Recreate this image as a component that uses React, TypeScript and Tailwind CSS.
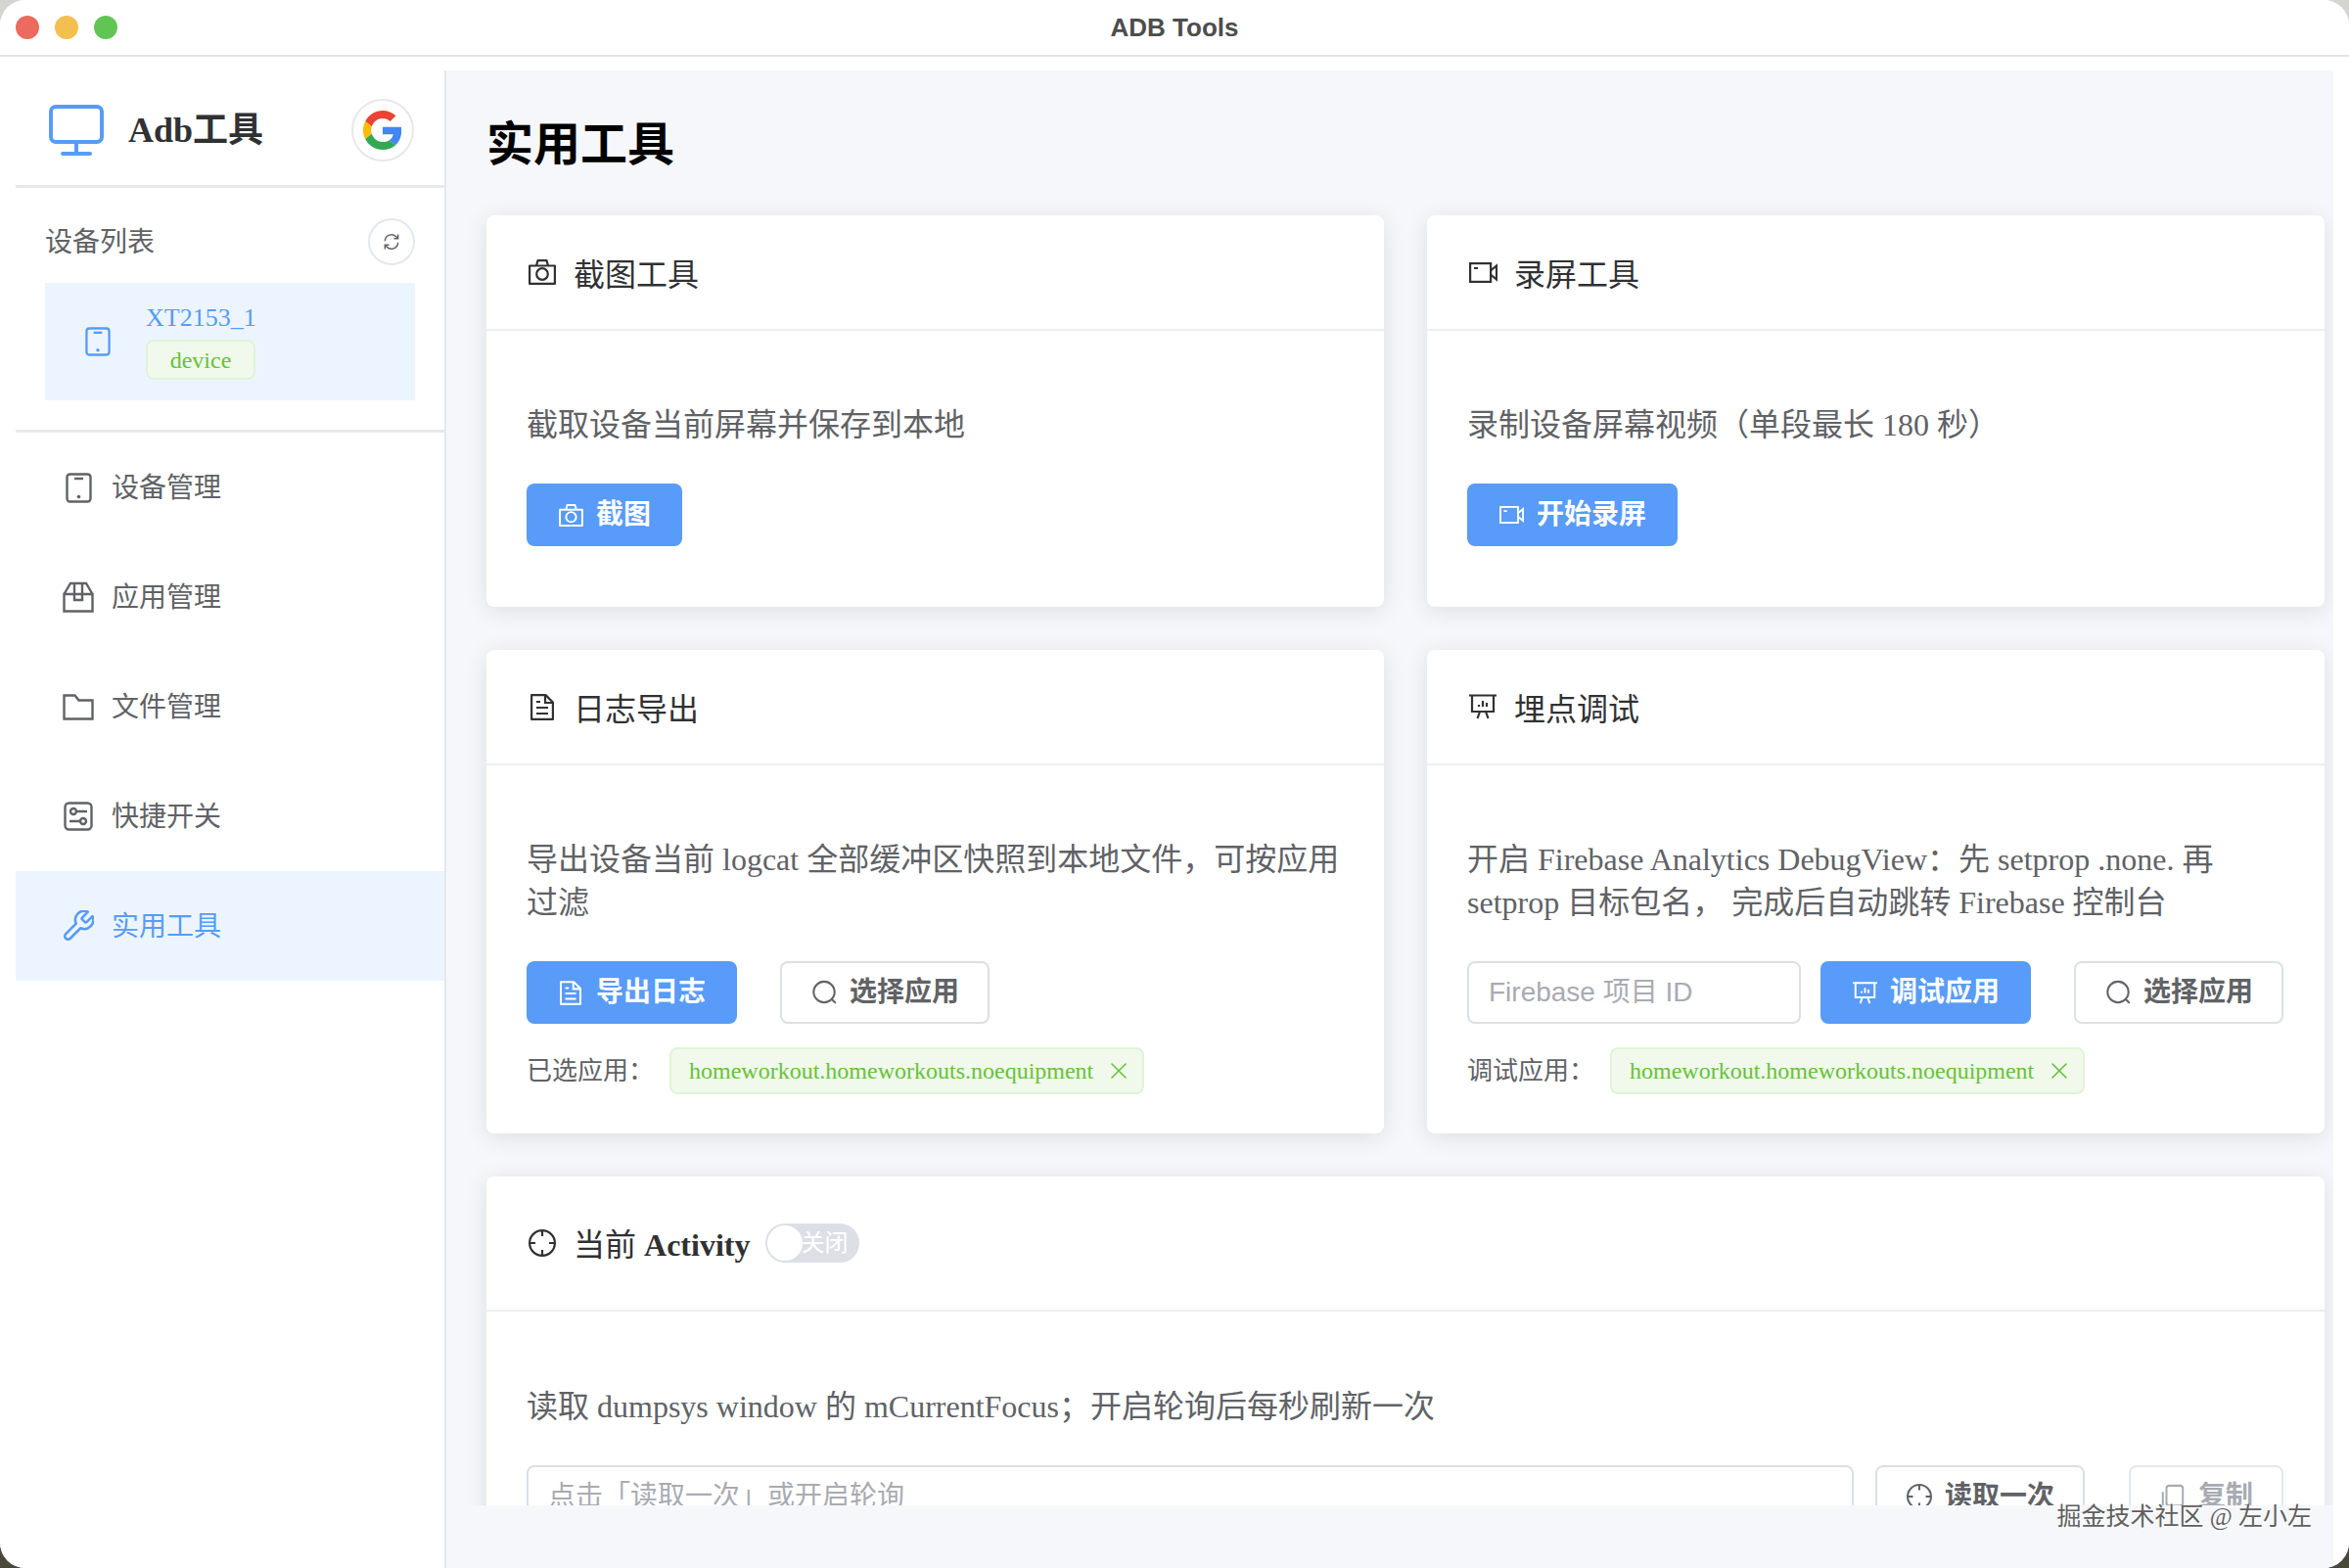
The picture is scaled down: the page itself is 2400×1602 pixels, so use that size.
import React from 'react';
import { X } from 'lucide-react';

type IconProps = { className?: string };

const line = {
  fill: 'none',
  stroke: 'currentColor',
  strokeWidth: 2.2,
};

const Monitor = ({ className }: IconProps) => (
  <svg {...line} viewBox="0 0 56 52" strokeWidth={4} className={className}>
    <rect x="2" y="2" width="52" height="36" rx="5" />
    <path d="M28 38v10M14 50h28" strokeLinecap="round" />
  </svg>
);

const Phone = ({ className }: IconProps) => (
  <svg {...line} viewBox="0 0 27 31" strokeWidth={2.4} className={className}>
    <rect x="1.5" y="1.500" width="24" height="28" rx="3" />
    <path d="M9 6h9" />
    <circle cx="13.500" cy="24.500" r="1.800" fill="currentColor" stroke="none" />
  </svg>
);

const Box = ({ className }: IconProps) => (
  <svg {...line} viewBox="0 0 32 32" strokeWidth={2.4} className={className}>
    <path d="M1.500 13h29v17.500h-29zM1.500 13 8 2h16l6.500 11M12 2v17h8V2" />
  </svg>
);

const Folder = ({ className }: IconProps) => (
  <svg {...line} viewBox="0 0 32 27" strokeWidth={2.4} className={className}>
    <path d="M1.500 1.500h11l4 5h14v19h-29z" />
  </svg>
);

const Toggle = ({ className }: IconProps) => (
  <svg {...line} viewBox="0 0 30 30" strokeWidth={2.4} className={className}>
    <rect x="1.500" y="1.500" width="27" height="27" rx="4" />
    <circle cx="10" cy="10" r="3" />
    <circle cx="20" cy="20" r="3" />
    <path d="M13 10h11M6 20h11" />
  </svg>
);

const Wrench = ({ className }: IconProps) => (
  <svg {...line} viewBox="1.500 1.500 21 21" strokeWidth={1.7} strokeLinejoin="round" className={className}>
    <path d="M14.700 6.300a1 1 0 0 0 0 1.400l1.600 1.600a1 1 0 0 0 1.400 0l3.770-3.770a6 6 0 0 1-7.940 7.940l-6.910 6.910a2.120 2.120 0 0 1-3-3l6.910-6.910a6 6 0 0 1 7.940-7.940l-3.760 3.760z" />
  </svg>
);

const Camera = ({ className }: IconProps) => (
  <svg {...line} viewBox="0 0 28 26" className={className}>
    <path d="M1.100 6.500h25.800v18.400H1.100zM8 6.500l1.500-5.400h9L20 6.500" strokeLinejoin="round" />
    <circle cx="14" cy="15" r="5.800" />
  </svg>
);

const Video = ({ className }: IconProps) => (
  <svg {...line} viewBox="0 0 29 21" className={className}>
    <rect x="1.100" y="1.100" width="21" height="18.800" />
    <path d="M5 6h4M22 8.500l6-5v14l-6-5" />
  </svg>
);

const Doc = ({ className }: IconProps) => (
  <svg {...line} viewBox="0 0 24 27" className={className}>
    <path d="M1.100 1.100h14.400l7.400 7.400v17.400H1.100z" strokeLinejoin="round" />
    <path d="M15 1.100v7.900h7.900M6 14h12M6 20h12M6 8h4" />
  </svg>
);

const Board = ({ className }: IconProps) => (
  <svg {...line} viewBox="0 0 28 26" className={className}>
    <path d="M0 1.500h28M3 1.500V18h22V1.500M8.500 25l2.500-7M19.500 25 17 18" />
    <path d="M10 13v-2M14 13V7M18 13V9" />
  </svg>
);

const Aim = ({ className }: IconProps) => (
  <svg {...line} viewBox="0 0 28 28" className={className}>
    <circle cx="14" cy="14" r="12.900" />
    <path d="M14 1v6M14 21v6M1 14h6M21 14h6" />
  </svg>
);

const Search = ({ className }: IconProps) => (
  <svg {...line} viewBox="0 0 28 28" className={className}>
    <circle cx="14" cy="13.500" r="11.500" />
    <path d="M22.500 21.500l3.500 3.500" strokeLinecap="round" />
  </svg>
);

const Copy = ({ className }: IconProps) => (
  <svg {...line} viewBox="0 0 28 28" className={className}>
    <rect x="7" y="2" width="18" height="22" rx="3" />
    <path d="M3 9v18h3" />
  </svg>
);

const Refresh = ({ className }: IconProps) => (
  <svg {...line} viewBox="0 0 24 24" strokeWidth={1.8} className={className}>
    <path d="M4 11a8 8 0 0 1 14-5l2 2M20 13a8 8 0 0 1-14 5l-2-2" />
    <path d="M20 3v5h-5M4 21v-5h5" />
  </svg>
);

const GoogleLogo = () => (
  <svg viewBox="0 0 48 48" className="w-10 h-10">
    <path fill="#EA4335" d="M24 9.500c3.500 0 6.700 1.200 9.200 3.600l6.900-6.900C35.900 2.400 30.400 0 24 0 14.600 0 6.500 5.400 2.600 13.200l8 6.200C12.500 13.700 17.800 9.500 24 9.500z" />
    <path fill="#4285F4" d="M47 24.500c0-1.600-.1-3.100-.4-4.500H24v9h12.900c-.6 3-2.200 5.500-4.700 7.200l7.700 6c4.500-4.200 7.100-10.300 7.100-17.700z" />
    <path fill="#FBBC05" d="M10.600 28.600c-.5-1.400-.8-3-.8-4.600s.3-3.200.8-4.600l-8-6.200C.9 16.500 0 20.100 0 24s.9 7.500 2.600 10.800l8-6.200z" />
    <path fill="#34A853" d="M24 48c6.500 0 11.900-2.100 15.900-5.800l-7.700-6c-2.200 1.500-4.900 2.300-8.200 2.300-6.200 0-11.500-4.200-13.400-9.900l-8 6.200C6.500 42.600 14.600 48 24 48z" />
  </svg>
);

function CardHeader({ icon, children }: { icon: React.ReactNode; children: React.ReactNode }) {
  return (
    <div className="h-[118px] pl-[42px] pr-10 flex items-center gap-[17px] border-b-2 border-[#ebeef5] text-[32px] text-[#303133] shrink-0">
      <span className="w-[30px] flex justify-center shrink-0">{icon}</span>
      <span className="pt-[5px]">{children}</span>
    </div>
  );
}

function PrimaryButton({ icon, label }: { icon: React.ReactNode; label: string }) {
  return (
    <button className="h-16 pl-[31px] pr-8 shrink-0 whitespace-nowrap rounded-lg bg-[#589bf8] text-white text-[28px] font-bold flex items-center gap-3">
      <span className="w-7 flex justify-center">{icon}</span>
      {label}
    </button>
  );
}

function PlainButton({ icon, label, disabled }: { icon: React.ReactNode; label: string; disabled?: boolean }) {
  const color = disabled ? 'text-[#a8abb2] border-[#e4e7ed]' : 'text-[#606266] border-[#dcdfe6]';
  return (
    <button className={`h-16 px-[29px] shrink-0 whitespace-nowrap rounded-lg bg-white border-2 text-[28px] font-bold flex items-center gap-3 ${color}`}>
      <span className="w-7 flex justify-center">{icon}</span>
      {label}
    </button>
  );
}

function PackageTag() {
  return (
    <span className="h-12 pl-[18px] pr-[10px] rounded-lg bg-[#f0f9eb] border-2 border-[#e1f3d8] text-[#67c23a] text-2xl flex items-center gap-3">
      homeworkout.homeworkouts.noequipment
      <X className="w-7 h-7" strokeWidth={1.4} />
    </span>
  );
}

const menu = [
  { label: '设备管理', icon: Phone, size: 'w-[27px] h-[31px]' },
  { label: '应用管理', icon: Box, size: 'w-[32px] h-[32px]' },
  { label: '文件管理', icon: Folder, size: 'w-[32px] h-[27px]' },
  { label: '快捷开关', icon: Toggle, size: 'w-[30px] h-[30px]' },
  { label: '实用工具', icon: Wrench, size: 'w-[32px] h-[32px]', active: true },
];

export default function App() {
  return (
    <div
      className="w-[2400px] h-[1602px] overflow-hidden bg-linear-to-b from-[#d4d4d0] via-[#d4d4d0] via-90% to-[#4a4838] to-97%"
      style={{ fontFamily: '"Liberation Serif", "Noto Sans CJK SC", serif' }}
    >
      <div className="relative w-full h-full rounded-[26px] overflow-hidden bg-white flex flex-col">
        {/* title bar */}
        <div className="relative h-[58px] shrink-0 bg-white border-b-2 border-[#e3e3e3] flex items-center justify-center">
          <div className="absolute left-[16px] top-[16px] flex gap-4">
            <span className="w-6 h-6 rounded-full bg-[#ec6a5e]" />
            <span className="w-6 h-6 rounded-full bg-[#f4bf4f]" />
            <span className="w-6 h-6 rounded-full bg-[#61c554]" />
          </div>
          <span className="text-[26px] font-bold text-[#4d4d4d]" style={{ fontFamily: '"Liberation Sans", sans-serif' }}>
            ADB Tools
          </span>
        </div>

        <div className="flex flex-1 min-h-0">
          {/* sidebar */}
          <aside className="w-[454px] shrink-0 pl-4 pt-[14px] bg-white flex flex-col">
            <div className="h-[120px] pt-[4px] pl-[34px] pr-[31px] flex items-center justify-between border-b-[3px] border-[#e8e9ec] shrink-0">
              <div className="flex items-center gap-[25px] text-[36px] font-bold text-[#303133]">
                <Monitor className="w-[56px] h-[52px] text-[#589bf8]" />
                Adb工具
              </div>
              <button className="w-[64px] h-[64px] rounded-full border-2 border-[#e8e8e8] flex items-center justify-center bg-white">
                <GoogleLogo />
              </button>
            </div>

            <div className="pl-[30px] pr-[30px] pt-[31px] pb-[30px] border-b-[3px] border-[#e8e9ec] shrink-0">
              <div className="h-12 flex items-center justify-between text-[28px] text-[#606266]">
                <span className="pt-[2px]">设备列表</span>
                <button className="w-12 h-12 rounded-full border-2 border-[#e4e7ed] flex items-center justify-center">
                  <Refresh className="w-5 h-5 text-[#606266]" />
                </button>
              </div>
              <div className="mt-[18px] h-[120px] pl-[41px] bg-[#ecf5ff] flex items-center gap-[36px]">
                <Phone className="w-[26px] h-[32px] text-[#589bf8]" />
                <div className="flex flex-col items-start gap-[7px]">
                  <span className="text-[26px] leading-[30px] text-[#589bf8]">XT2153_1</span>
                  <span className="w-[112px] h-[41px] rounded-lg bg-[#f0f9eb] border-2 border-[#e1f3d8] text-[#67c23a] text-2xl flex items-center justify-center">
                    device
                  </span>
                </div>
              </div>
            </div>

            <nav className="flex flex-col">
              {menu.map((item) => {
                const Icon = item.icon;
                return (
                  <div
                    key={item.label}
                    className={`h-[112px] pl-[48px] flex items-center gap-[18px] text-[28px] ${
                      item.active ? 'bg-[#ecf5ff] text-[#589bf8]' : 'text-[#606266]'
                    }`}
                  >
                    <span className="w-[32px] flex justify-center">
                      <Icon className={item.size} />
                    </span>
                    <span className="pt-[2px]">{item.label}</span>
                  </div>
                );
              })}
            </nav>
          </aside>

          {/* main */}
          <main className="flex-1 min-w-0 pt-[14px] pr-[16px] bg-white flex flex-col">
            <div className="flex-1 min-h-0 bg-[#f5f7fa] border-l-2 border-[#e6e8ee] pb-[64px] flex flex-col">
              <div className="flex-1 min-h-0 overflow-hidden pl-[41px] pr-[9px]">
                <h1 className="h-[148px] pt-[4px] flex items-center text-[48px] font-bold text-black">实用工具</h1>

                <div className="grid grid-cols-2 gap-x-[44px] gap-y-[44px]">
                  <section className="h-[400px] bg-white rounded-lg shadow-[0_4px_24px_rgba(0,0,0,0.1)] flex flex-col">
                    <CardHeader icon={<Camera className="w-[28px] h-[26px]" />}>截图工具</CardHeader>
                    <div className="px-[41px] pt-[74px]">
                      <p className="text-[32px] leading-[44px] text-[#606266]">截取设备当前屏幕并保存到本地</p>
                      <div className="mt-[38px] flex">
                        <PrimaryButton icon={<Camera className="w-[25px] h-[23px]" />} label="截图" />
                      </div>
                    </div>
                  </section>

                  <section className="h-[400px] bg-white rounded-lg shadow-[0_4px_24px_rgba(0,0,0,0.1)] flex flex-col">
                    <CardHeader icon={<Video className="w-[29px] h-[21px]" />}>录屏工具</CardHeader>
                    <div className="px-[41px] pt-[74px]">
                      <p className="text-[32px] leading-[44px] text-[#606266]">录制设备屏幕视频（单段最长 180 秒）</p>
                      <div className="mt-[38px] flex">
                        <PrimaryButton icon={<Video className="w-[25px] h-[18px]" />} label="开始录屏" />
                      </div>
                    </div>
                  </section>

                  <section className="h-[494px] bg-white rounded-lg shadow-[0_4px_24px_rgba(0,0,0,0.1)] flex flex-col">
                    <CardHeader icon={<Doc className="w-[24px] h-[27px]" />}>日志导出</CardHeader>
                    <div className="px-[41px] pt-[74px]">
                      <p className="text-[32px] leading-[44px] text-[#606266]">
                        导出设备当前 logcat 全部缓冲区快照到本地文件，可按应用
                        <br />
                        过滤
                      </p>
                      <div className="mt-[38px] flex gap-[44px]">
                        <PrimaryButton icon={<Doc className="w-[22px] h-[25px]" />} label="导出日志" />
                        <PlainButton icon={<Search className="w-[26px] h-[26px]" />} label="选择应用" />
                      </div>
                      <div className="mt-6 flex items-center gap-[16px] text-[26px] text-[#606266]">
                        已选应用：
                        <PackageTag />
                      </div>
                    </div>
                  </section>

                  <section className="h-[494px] bg-white rounded-lg shadow-[0_4px_24px_rgba(0,0,0,0.1)] flex flex-col">
                    <CardHeader icon={<Board className="w-[28px] h-[26px]" />}>埋点调试</CardHeader>
                    <div className="px-[41px] pt-[74px]">
                      <p className="text-[32px] leading-[44px] text-[#606266]">
                        开启 Firebase Analytics DebugView：先 setprop .none. 再
                        <br />
                        setprop 目标包名， 完成后自动跳转 Firebase 控制台
                      </p>
                      <div className="mt-[38px] flex items-center">
                        <input
                          readOnly
                          placeholder="Firebase 项目 ID"
                          className="w-[341px] h-16 px-[20px] shrink-0 rounded-lg border-2 border-[#dcdfe6] bg-white text-[28px] placeholder:text-[#a8abb2]"
                          style={{ fontFamily: '"Liberation Sans", "Noto Sans CJK SC", sans-serif' }}
                        />
                        <div className="ml-[20px] shrink-0">
                          <PrimaryButton icon={<Board className="w-[25px] h-[23px]" />} label="调试应用" />
                        </div>
                        <div className="ml-[44px] shrink-0">
                          <PlainButton icon={<Search className="w-[26px] h-[26px]" />} label="选择应用" />
                        </div>
                      </div>
                      <div className="mt-6 flex items-center gap-[16px] text-[26px] text-[#606266]">
                        调试应用：
                        <PackageTag />
                      </div>
                    </div>
                  </section>

                  <section className="col-span-2 h-[600px] bg-white rounded-lg shadow-[0_4px_24px_rgba(0,0,0,0.1)] flex flex-col">
                    <div className="h-[138px] pl-[43px] pr-10 flex items-center border-b-2 border-[#ebeef5] text-[32px] text-[#303133] shrink-0">
                      <Aim className="w-7 h-7" />
                      <span className="ml-[18px] pt-[3px]">当前</span>
                      <span className="ml-2 pt-[3px] font-bold">Activity</span>
                      <span className="relative ml-[16px] w-[96px] h-10 rounded-full bg-[#dcdfe6] text-white text-2xl flex items-center justify-end pr-[12px]">
                        <span className="absolute left-[2px] top-[2px] w-9 h-9 rounded-full bg-white" />
                        关闭
                      </span>
                    </div>
                    <div className="px-[41px] pt-[75px]">
                      <p className="text-[32px] leading-[44px] text-[#606266]">
                        读取 dumpsys window 的 mCurrentFocus；开启轮询后每秒刷新一次
                      </p>
                      <div className="mt-[38px] flex items-center">
                        <input
                          readOnly
                          placeholder="点击「读取一次」或开启轮询"
                          className="w-[1356px] h-16 px-[20px] shrink-0 rounded-lg border-2 border-[#dcdfe6] bg-white text-[28px] placeholder:text-[#a8abb2]"
                        />
                        <div className="ml-[22px] shrink-0">
                          <PlainButton icon={<Aim className="w-[26px] h-[26px]" />} label="读取一次" />
                        </div>
                        <div className="ml-[45px] shrink-0">
                          <PlainButton disabled icon={<Copy className="w-[26px] h-[26px]" />} label="复制" />
                        </div>
                      </div>
                    </div>
                  </section>
                </div>
              </div>
            </div>
          </main>
        </div>

        <span
          className="absolute right-[38px] bottom-[38px] text-[25px] leading-[28px] text-[#5f5f5f]"
          style={{ textShadow: '1px 1px 0 #fff' }}
        >
          掘金技术社区 @ 左小左
        </span>
      </div>
    </div>
  );
}
